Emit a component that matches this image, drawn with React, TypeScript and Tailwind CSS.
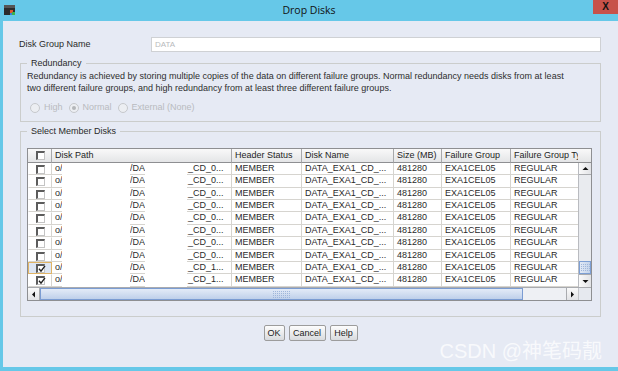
import React from 'react'

const colWidths = ['w-[24px]', 'w-[180px]', 'w-[70px]', 'w-[92px]', 'w-[48px]', 'w-[69px]', 'w-[67px]']
const headers = ['', 'Disk Path', 'Header Status', 'Disk Name', 'Size (MB)', 'Failure Group', 'Failure Group Type']
const rowHeights = ['h-[12px]', 'h-[13px]', 'h-[12px]', 'h-[12px]', 'h-[13px]', 'h-[12px]', 'h-[13px]', 'h-[12px]', 'h-[12px]', 'h-[13px]']

const rows = rowHeights.map((h, i) => ({
  h,
  suffix: i < 8 ? '_CD_0...' : '_CD_1...',
  checked: i >= 8,
  focused: i === 8,
}))

function Checkbox({ checked }: { checked?: boolean }) {
  return (
    <span className="relative block w-[9px] h-[9px] bg-white border-t-2 border-l-2 border-r border-b border-t-[#5c5c5c] border-l-[#5c5c5c] border-r-[#c4c4c4] border-b-[#c4c4c4]">
      {checked && (
        <svg className="absolute left-[0px] top-[-1px]" width="8" height="8" viewBox="0 0 8 8">
          <path d="M1 3.8 L3 6.2 L7 0.8" fill="none" stroke="#1e1e1e" strokeWidth="1.4" />
        </svg>
      )}
    </span>
  )
}

function Arrow({ dir }: { dir: 'up' | 'down' | 'left' | 'right' }) {
  const d = {
    up: 'M0.5 4 L3.5 1 L6.5 4 Z',
    down: 'M0.5 1 L3.5 4 L6.5 1 Z',
    left: 'M4 0.5 L1 3.5 L4 6.5 Z',
    right: 'M1 0.5 L4 3.5 L1 6.5 Z',
  }[dir]
  const vertical = dir === 'up' || dir === 'down'
  return (
    <svg width={vertical ? 7 : 5} height={vertical ? 5 : 7} viewBox={vertical ? '0 0 7 5' : '0 0 5 7'}>
      <path d={d} fill="#111" />
    </svg>
  )
}

function Grip({ vertical }: { vertical?: boolean }) {
  return vertical ? (
    <svg width="9" height="7" viewBox="0 0 9 7">
      {[0, 2, 4, 6].map(y => (
        <line key={y} x1="0" y1={y + 0.5} x2="9" y2={y + 0.5} stroke="#9fb6da" strokeDasharray="1 1" />
      ))}
    </svg>
  ) : (
    <svg width="18" height="7" viewBox="0 0 18 7">
      {[0, 2, 4, 6].map(y => (
        <line key={y} x1="0" y1={y + 0.5} x2="18" y2={y + 0.5} stroke="#9fb6da" strokeDasharray="1 1" />
      ))}
    </svg>
  )
}

function Radio({ label, selected }: { label: string; selected?: boolean }) {
  return (
    <div className="flex items-center gap-[4px]">
      <span className="w-[10px] h-[10px] rounded-full border border-[#c6c8cc] bg-[#eceef2] flex items-center justify-center">
        {selected && <span className="w-[4px] h-[4px] rounded-full bg-[#b4b6ba]" />}
      </span>
      <span className="text-[9px] text-[#b9bbbf]">{label}</span>
    </div>
  )
}

function DialogButton({ label, width }: { label: string; width: string }) {
  return (
    <button className={`${width} h-[16px] rounded-[2px] border border-[#9c9c9c] bg-linear-to-b from-[#fdfdfd] to-[#d9dbde] text-[9px] text-[#222] leading-none`}>
      {label}
    </button>
  )
}

function TitleIcon() {
  return (
    <svg width="11" height="10" viewBox="0 0 11 10">
      <rect x="0" y="0" width="11" height="10" fill="#2b2b2b" />
      <rect x="0" y="0" width="11" height="3" fill="#555" />
      <rect x="6" y="5" width="3" height="3" fill="#e0552c" />
      <rect x="8" y="7" width="3" height="3" fill="#3cb34a" />
      <rect x="6" y="8" width="2" height="2" fill="#3a7fd6" />
    </svg>
  )
}

export default function App() {
  return (
    <div className="w-[618px] h-[371px] overflow-hidden bg-[#66c8e8] flex flex-col font-['Liberation_Sans',Arial,sans-serif] text-[#2a2a2a]">
      {/* title bar */}
      <div className="h-[21px] flex items-start">
        <div className="w-[100px] pl-[4px] pt-[5px]">
          <TitleIcon />
        </div>
        <div className="flex-1 text-center text-[10.5px] leading-[21px] text-[#111] font-['Open_Sans',sans-serif]">Drop Disks</div>
        <div className="w-[100px] flex justify-end">
          <div className="w-[25px] h-[14px] bg-[#c7524a] flex items-center justify-center text-[10px] font-bold text-[#111] leading-none">X</div>
        </div>
      </div>

      {/* body */}
      <div className="relative flex-1 ml-[3px] mb-[4px] bg-[#e6eaf4] flex flex-col">
        <div className="mt-[16px] flex items-center">
          <div className="w-[148px] pl-[16px] text-[9px] text-[#2a2a2a]">Disk Group Name</div>
          <div className="w-[450px] h-[15px] bg-white border border-[#cfd1d4] pl-[3px] text-[8px] leading-[13px] text-[#b8babd]">DATA</div>
        </div>

        <fieldset className="ml-[17px] mt-[6px] w-[581px] border border-[#cbcdcc] pl-[6px] pr-[6px] pt-[1px] pb-[7px]">
          <legend className="px-[4px] text-[9px] leading-[11px] text-[#2a2a2a]">Redundancy</legend>
          <p className="text-[9px] leading-[12px] text-[#2e2e2e]">
            Redundancy is achieved by storing multiple copies of the data on different failure groups. Normal redundancy needs disks from at least
            <br />
            two different failure groups, and high redundancy from at least three different failure groups.
          </p>
          <div className="mt-[8px] h-[12px] flex items-center gap-[6px] pl-[3px]">
            <Radio label="High" />
            <Radio label="Normal" selected />
            <Radio label="External (None)" />
          </div>
        </fieldset>

        <fieldset className="ml-[17px] mt-[4px] w-[581px] border border-[#cbcdcc] pl-[6px] pr-[8px] pt-[11px] pb-[15px]">
          <legend className="px-[4px] text-[9px] leading-[11px] text-[#2a2a2a]">Select Member Disks</legend>

          {/* table */}
          <div className="w-[565px] border border-[#8e8f92] bg-white flex flex-col">
            <div className="flex h-[14px]">
              {headers.map((h, i) => (
                <div
                  key={i}
                  className={`${colWidths[i]} h-[14px] shrink-0 overflow-hidden whitespace-nowrap border-r border-b border-r-[#a7a8aa] border-b-[#8e8f92] bg-linear-to-b from-[#f9f9f9] to-[#e4e5e7] px-[3px] text-[9px] leading-[13px] text-[#1e1e1e] ${i === 0 ? 'flex items-center pl-[8px]' : ''} ${i === 6 ? 'border-r-0' : ''}`}
                >
                  {i === 0 ? <Checkbox /> : h}
                </div>
              ))}
              <div className="w-[13px] h-[14px] border-b border-[#8e8f92] bg-linear-to-b from-[#f9f9f9] to-[#e4e5e7]" />
            </div>

            <div className="flex">
              <div className="flex flex-col">
                {rows.map((r, i) => (
                  <div key={i} className={`flex ${r.h} text-[9px] text-[#2a2a2a] whitespace-nowrap`}>
                    <div
                      className={`w-[24px] shrink-0 flex items-center pl-[7px] border ${
                        r.focused ? 'border-[#e0b466] bg-[#dde6f4]' : 'border-transparent border-r-[#d6d4cf] border-b-[#d6d4cf]'
                      }`}
                    >
                      <Checkbox checked={r.checked} />
                    </div>
                    <div className="w-[180px] shrink-0 flex">
                      <div className="w-[10px] overflow-hidden pl-[3px] border-b border-[#d6d4cf] flex items-center">o/</div>
                      <div className="w-[68px] bg-white" />
                      <div className="w-[15px] overflow-hidden border-b border-[#d6d4cf] flex items-center">/DA</div>
                      <div className="w-[42px] bg-white" />
                      <div className="w-[45px] overflow-hidden pl-[1px] border-r border-b border-[#d6d4cf] flex items-center">{r.suffix}</div>
                    </div>
                    <div className="w-[70px] shrink-0 px-[3px] border-r border-b border-[#d6d4cf] flex items-center">MEMBER</div>
                    <div className="w-[92px] shrink-0 px-[3px] border-r border-b border-[#d6d4cf] flex items-center overflow-hidden">DATA_EXA1_CD_...</div>
                    <div className="w-[48px] shrink-0 px-[3px] border-r border-b border-[#d6d4cf] flex items-center">481280</div>
                    <div className="w-[69px] shrink-0 px-[3px] border-r border-b border-[#d6d4cf] flex items-center">EXA1CEL05</div>
                    <div className="w-[67px] shrink-0 px-[3px] border-b border-[#d6d4cf] flex items-center">REGULAR</div>
                  </div>
                ))}
              </div>

              {/* vertical scrollbar */}
              <div className="w-[13px] flex flex-col border-l border-[#b9bbc0] bg-[#e9ebef]">
                <div className="h-[12px] flex items-center justify-center bg-linear-to-r from-[#fafafa] to-[#e2e3e6] border-b border-[#a9abaf]">
                  <Arrow dir="up" />
                </div>
                <div className="flex-1" />
                <div className="h-[13px] flex items-center justify-center border border-[#7d9fd4] bg-linear-to-r from-[#e2eaf6] to-[#c3d3ea]">
                  <Grip vertical />
                </div>
                <div className="h-[13px] flex items-center justify-center bg-linear-to-r from-[#fafafa] to-[#e2e3e6] border-t border-[#a9abaf]">
                  <Arrow dir="down" />
                </div>
              </div>
            </div>

            {/* horizontal scrollbar */}
            <div className="h-[13px] flex border-t border-[#a9abaf] bg-[#eef0f4]">
              <div className="w-[12px] flex items-center justify-center bg-linear-to-b from-[#fafafa] to-[#e2e3e6] border-r border-[#a9abaf]">
                <Arrow dir="left" />
              </div>
              <div className="w-[483px] flex items-center justify-center border border-[#7b9cd2] bg-linear-to-b from-[#e3ebf7] to-[#bfd0ea]">
                <Grip />
              </div>
              <div className="w-[43px]" />
              <div className="w-[12px] flex items-center justify-center bg-linear-to-b from-[#fafafa] to-[#e2e3e6] border-l border-[#a9abaf]">
                <Arrow dir="right" />
              </div>
              <div className="w-[13px] bg-[#e6e9ef] border-l border-[#c3c5c9]" />
            </div>
          </div>
        </fieldset>

        <div className="mt-[8px] flex justify-center gap-[4px]">
          <DialogButton label="OK" width="w-[21px]" />
          <DialogButton label="Cancel" width="w-[37px]" />
          <DialogButton label="Help" width="w-[28px]" />
        </div>

        {/* watermark */}
        <div className="absolute right-[16px] bottom-[6px] text-[20px] leading-none text-white/75 font-['Liberation_Sans','Noto_Sans_CJK_SC',sans-serif]">
          CSDN @神笔码靓
        </div>
      </div>
    </div>
  )
}
